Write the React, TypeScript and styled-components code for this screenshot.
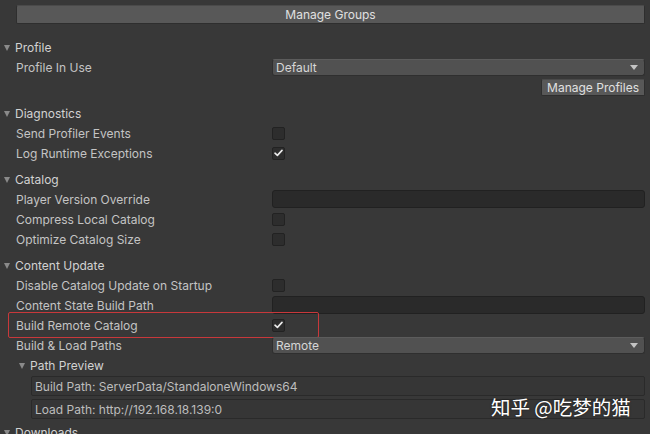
import React, { ReactElement, ReactNode } from "react";
import styled, { createGlobalStyle } from "styled-components";

/*
==========================
    Global
==========================
*/
const GlobalStyle = createGlobalStyle`
  html, body {
    margin: 0;
    padding: 0;
    background: #383838;
    overflow: hidden;
  }
  body {
    font-family: Inter, "Noto Sans", "Liberation Sans", sans-serif;
    font-size: 12px;
    color: #c4c4c4;
  }
`;

/*
==========================
    Styled Components
==========================
*/
const Page = styled.div`
  position: relative;
  width: 650px;
  height: 434px;
  padding-top: 5px;
  box-sizing: border-box;
  overflow: hidden;
`;

const WideButton = styled.div`
  margin: 0 5px 0 16px;
  height: 17px;
  background: #585858;
  border: 1px solid #2e2e2e;
  border-top-color: #4a4a4a;
  border-radius: 2px;
  display: flex;
  align-items: center;
  justify-content: center;
  color: #e0e0e0;
`;

const Section = styled.div<{ $gap?: number }>`
  margin-top: ${(p) => p.$gap ?? 6}px;
  display: flex;
  flex-direction: column;
`;

const Header = styled.div<{ $indent?: number }>`
  height: 20px;
  display: flex;
  align-items: center;
  padding-left: ${(p) => p.$indent ?? 4}px;
  gap: 5px;
  color: #d2d2d2;
`;

const Foldout = styled.span`
  width: 0;
  height: 0;
  border-left: 3.5px solid transparent;
  border-right: 3.5px solid transparent;
  border-top: 6px solid #8a8a8a;
  margin-top: 1px;
`;

const Row = styled.div`
  position: relative;
  height: 20px;
  display: flex;
  align-items: center;
  padding: 0 5px 0 16px;
`;

const Label = styled.span`
  width: 256px;
  flex: none;
  white-space: nowrap;
`;

const Field = styled.div`
  flex: 1;
  height: 16px;
  background: #2a2a2a;
  border: 1px solid #212121;
  border-radius: 3px;
`;

const Popup = styled.div`
  flex: 1;
  height: 17px;
  background: #515151;
  border: 1px solid #2f2f2f;
  border-top-color: #5c5c5c;
  border-radius: 3px;
  display: flex;
  align-items: center;
  justify-content: space-between;
  padding: 0 6px 0 3px;
  box-sizing: border-box;
  color: #d6d6d6;
`;

const PopupArrow = styled.span`
  width: 0;
  height: 0;
  border-left: 4px solid transparent;
  border-right: 4px solid transparent;
  border-top: 5px solid #c4c4c4;
`;

const Check = styled.div`
  width: 13px;
  height: 13px;
  box-sizing: border-box;
  background: #2d2d2d;
  border: 1px solid #222222;
  border-radius: 2px;
  display: flex;
  align-items: center;
  justify-content: center;
`;

const RightRow = styled.div`
  height: 20px;
  display: flex;
  align-items: center;
  justify-content: flex-end;
  padding-right: 5px;
`;

const SmallButton = styled.div`
  height: 15px;
  padding: 0 5px;
  background: #585858;
  border: 1px solid #2e2e2e;
  border-top-color: #4a4a4a;
  border-radius: 2px;
  display: flex;
  align-items: center;
  color: #e0e0e0;
`;

const PreviewList = styled.div`
  display: flex;
  flex-direction: column;
  gap: 3px;
  margin: 1px 5px 0 31px;
`;

const PreviewField = styled.div`
  height: 18px;
  background: #363636;
  border: 1px solid #2a2a2a;
  border-radius: 2px;
  display: flex;
  align-items: center;
  padding-left: 3px;
  color: #bdbdbd;
`;

const Highlight = styled.div`
  position: absolute;
  left: 8px;
  top: -3px;
  width: 309px;
  height: 24px;
  border: 1px solid #c8383b;
  border-radius: 2px;
  pointer-events: none;
`;

const Watermark = styled.div`
  position: absolute;
  left: 491px;
  top: 392px;
  font-family: "Noto Sans CJK SC", "Noto Sans", sans-serif;
  font-size: 19.5px;
  color: #ffffff;
  text-shadow: 0 0 2px rgba(0, 0, 0, 0.6);
  white-space: nowrap;
`;

/*
==========================
    Parts
==========================
*/
const Tick = (): ReactElement => (
  <svg width="9" height="8" viewBox="0 0 9 8">
    <path
      d="M1 4.2 L3.4 6.4 L8 1.4"
      fill="none"
      stroke="#ececec"
      strokeWidth="1.6"
      strokeLinecap="round"
      strokeLinejoin="round"
    />
  </svg>
);

const Toggle = ({ label, on = false, children }: { label: string; on?: boolean; children?: ReactNode }): ReactElement => (
  <Row>
    <Label>{label}</Label>
    <Check>{on && <Tick />}</Check>
    {children}
  </Row>
);

const TextRow = ({ label }: { label: string }): ReactElement => (
  <Row>
    <Label>{label}</Label>
    <Field />
  </Row>
);

const PopupRow = ({ label, value }: { label: string; value: string }): ReactElement => (
  <Row>
    <Label>{label}</Label>
    <Popup>
      {value}
      <PopupArrow />
    </Popup>
  </Row>
);

const FoldHeader = ({ title, indent }: { title: string; indent?: number }): ReactElement => (
  <Header $indent={indent}>
    <Foldout />
    {title}
  </Header>
);

/*
==========================
    React Element
==========================
*/
const App = (): ReactElement => {
  return (
    <Page>
      <GlobalStyle />
      <WideButton>Manage Groups</WideButton>

      {/* Profile */}
      <Section $gap={13}>
        <FoldHeader title="Profile" />
        <PopupRow label="Profile In Use" value="Default" />
        <RightRow>
          <SmallButton>Manage Profiles</SmallButton>
        </RightRow>
      </Section>

      {/* Diagnostics */}
      <Section>
        <FoldHeader title="Diagnostics" />
        <Toggle label="Send Profiler Events" />
        <Toggle label="Log Runtime Exceptions" on />
      </Section>

      {/* Catalog */}
      <Section>
        <FoldHeader title="Catalog" />
        <TextRow label="Player Version Override" />
        <Toggle label="Compress Local Catalog" />
        <Toggle label="Optimize Catalog Size" />
      </Section>

      {/* Content Update */}
      <Section>
        <FoldHeader title="Content Update" />
        <Toggle label="Disable Catalog Update on Startup" />
        <TextRow label="Content State Build Path" />
        <Toggle label="Build Remote Catalog" on>
          <Highlight />
        </Toggle>
        <PopupRow label="Build & Load Paths" value="Remote" />
        <FoldHeader title="Path Preview" indent={19} />
        <PreviewList>
          <PreviewField>Build Path: ServerData/StandaloneWindows64</PreviewField>
          <PreviewField>Load Path: http://192.168.18.139:0</PreviewField>
        </PreviewList>
      </Section>

      {/* Downloads */}
      <Section $gap={3}>
        <FoldHeader title="Downloads" />
      </Section>

      <Watermark>知乎 @吃梦的猫</Watermark>
    </Page>
  );
};

export default App;
